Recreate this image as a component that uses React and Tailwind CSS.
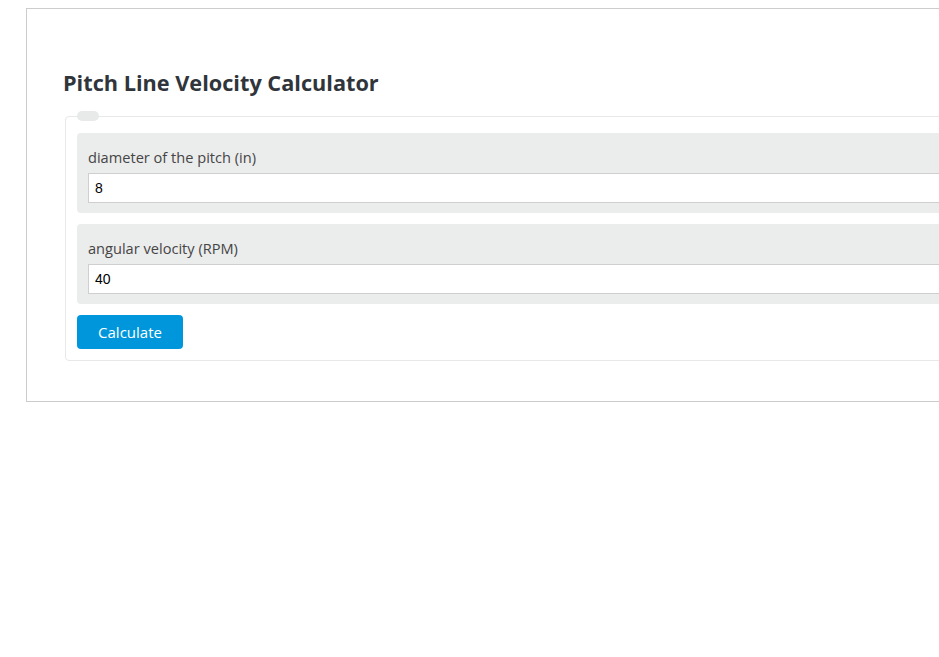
export default function App() {
  const fields = [
    { label: 'diameter of the pitch (in)', value: '8' },
    { label: 'angular velocity (RPM)', value: '40' },
  ];

  return (
    <div className="w-full min-h-screen overflow-hidden bg-white" style={{ fontFamily: '"Open Sans", "Noto Sans", sans-serif' }}>
      <div className="ml-[26px] mt-[8px] w-[1000px] border border-[#cccccc] pl-[38px] pt-[60px] pb-[40px]">
        <h1 className="-ml-[2px] text-[21.7px] font-bold leading-[28px] text-[#2f353b]">
          Pitch Line Velocity Calculator
        </h1>
        <div className="relative mt-[19px] rounded-[4px] border border-[#e8e8e8] px-[11px] pt-[16px] pb-[11px]">
          <span className="absolute left-[11px] -top-[6px] h-[10px] w-[22px] rounded-full bg-[#e8e9e9]" />
          <div className="flex flex-col gap-[11px]">
            {fields.map((f) => (
              <div key={f.label} className="rounded-[4px] bg-[#ebecec] px-[11px] pt-[13px] pb-[10px]">
                <label className="block text-[14.6px] leading-[22px] text-[#454545]">{f.label}</label>
                <input
                  defaultValue={f.value}
                  className="mt-[5px] block h-[30px] w-full border border-[#cfcfcf] bg-white px-[6px] text-[14px] text-black outline-none"
                  style={{ fontFamily: '"Liberation Sans", Arial, sans-serif' }}
                />
              </div>
            ))}
            <div>
              <button className="h-[34px] w-[106px] rounded-[4px] bg-[#0096db] text-[15px] text-white">
                Calculate
              </button>
            </div>
          </div>
        </div>
      </div>
    </div>
  );
}
